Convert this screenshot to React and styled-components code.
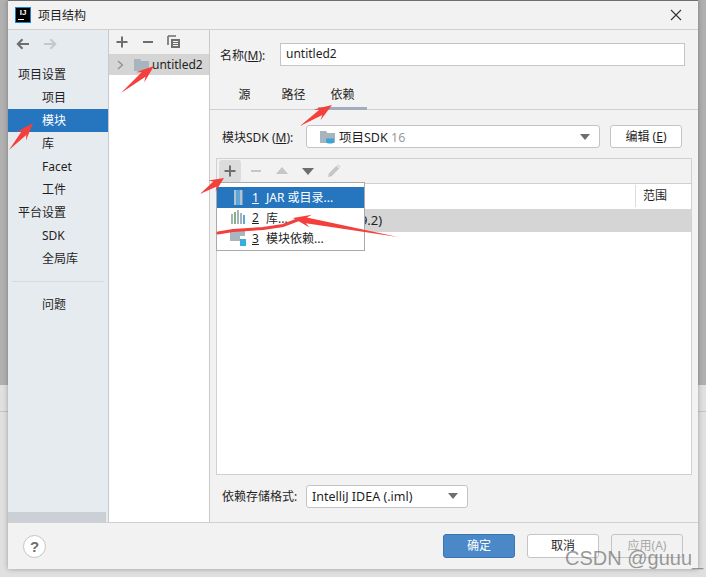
import styled, { createGlobalStyle } from "styled-components";

const FONT = `"Noto Sans", "Noto Sans CJK SC", sans-serif`;

const GlobalStyle = createGlobalStyle`
  html, body { margin: 0; padding: 0; background: #e4e4e4; }
  * { box-sizing: border-box; }
`;

const NAV = [
  { label: "项目设置", heading: true },
  { label: "项目" },
  { label: "模块", selected: true },
  { label: "库" },
  { label: "Facet" },
  { label: "工件" },
  { label: "平台设置", heading: true },
  { label: "SDK" },
  { label: "全局库" },
];

const MENU = [
  { key: "1", label: "JAR 或目录...", icon: "jar", selected: true },
  { key: "2", label: "库...", icon: "lib" },
  { key: "3", label: "模块依赖...", icon: "module" },
];

// tail -> tip marker strokes drawn on top of the screenshot
const ARROWS = [
  { from: [9, 150], to: [33, 123] },
  { from: [121, 93], to: [154, 66] },
  { from: [300, 126], to: [332, 105] },
  { from: [200, 194], to: [224, 178] },
  { from: [398, 237], to: [293, 218] },
];

const arrowPoints = ({ from, to }) => {
  const dx = to[0] - from[0];
  const dy = to[1] - from[1];
  const len = Math.hypot(dx, dy);
  const ux = dx / len;
  const uy = dy / len;
  const at = (along, side) =>
    `${to[0] - ux * along - uy * side},${to[1] - uy * along + ux * side}`;
  const head = Math.min(18, len * 0.5);
  return [
    `${from[0]},${from[1]}`,
    at(head * 0.75, 3),
    at(head, 6.500),
    `${to[0]},${to[1]}`,
    at(head, -6.500),
    at(head * 0.75, -3),
  ].join(" ");
};

const Plus = () => (
  <svg width="14" height="14" viewBox="0 0 14 14">
    <path d="M7 1.5v11M1.5 7h11" stroke="#6e6e6e" strokeWidth="2" />
  </svg>
);

const Minus = ({ color = "#6e6e6e" }) => (
  <svg width="14" height="14" viewBox="0 0 14 14">
    <path d="M2 7h10" stroke={color} strokeWidth="2" />
  </svg>
);

const Triangle = ({ color, down }) => (
  <svg width="14" height="10" viewBox="0 0 14 10">
    <path d={down ? "M1 2h12L7 9z" : "M1 8h12L7 1z"} fill={color} />
  </svg>
);

const Pencil = () => (
  <svg width="14" height="14" viewBox="0 0 14 14">
    <path d="M1 13l.8-3.6L9.4 1.8l2.8 2.8-7.6 7.6zM10.2 1l.8-.4 2.4 2.4-.4.8z" fill="#c6c6c6" />
  </svg>
);

const CopyIcon = () => (
  <svg width="14" height="14" viewBox="0 0 14 14">
    <path d="M1 1h8M1 1v9" stroke="#6e6e6e" strokeWidth="1.6" fill="none" />
    <path d="M4 4h9v9H4z" fill="#6e6e6e" />
    <path d="M6 6.5h5M6 8.5h5M6 10.5h5" stroke="#f2f2f2" strokeWidth="1" />
  </svg>
);

const NavArrow = ({ color, flip }) => (
  <svg width="14" height="12" viewBox="0 0 14 12" style={flip ? { transform: "scaleX(-1)" } : undefined}>
    <path d="M13 6H2M6.5 1.2L1.8 6l4.7 4.8" stroke={color} strokeWidth="2" fill="none" />
  </svg>
);

const Folder = ({ cup }) => (
  <svg width="15" height="14" viewBox="0 0 15 14">
    <path d="M0 1h6l1.5 2H15v10H0z" fill="#a8b5bf" />
    {cup && <path d="M6 8.500h8v2.500a2.500 2.500 0 0 1-2.500 2.500h-3A2.500 2.500 0 0 1 6 11z" fill="#3aa3d8" />}
  </svg>
);

const MenuIcon = ({ type }) => {
  if (type === "jar") {
    return (
      <svg width="16" height="15" viewBox="0 0 16 15">
        <path d="M4 0h2.500v15H4zM10 0h2.500v15H10z" fill="#b4c2cc" />
        <path d="M6.500 0H10v15H6.500z" fill="#5aa9dd" />
      </svg>
    );
  }
  if (type === "lib") {
    return (
      <svg width="16" height="15" viewBox="0 0 16 15">
        <path d="M1 4h2v10H1zM10 3h2v11h-2z" fill="#a6b3bd" />
        <path d="M4 2h2v12H4z" fill="#7cb87e" />
        <path d="M7 0h2v14H7z" fill="#a6b3bd" />
        <path d="M13 5h2v9h-2z" fill="#5aa9dd" />
      </svg>
    );
  }
  return (
    <svg width="16" height="15" viewBox="0 0 16 15">
      <path d="M0 0h15v5h-5v5H0z" fill="#a9b5bf" />
      <path d="M10 8h6v7h-6z" fill="#38ade0" />
    </svg>
  );
};

const Caret = () => (
  <svg width="10" height="6" viewBox="0 0 10 6">
    <path d="M0 0h10L5 6z" fill="#6e6e6e" />
  </svg>
);

const App = () => {
  return (
    <Page>
      <GlobalStyle />
      <Dialog>
        <TitleBar>
          <AppLogo>
            <span>IJ</span>
          </AppLogo>
          <Title>项目结构</Title>
          <CloseIcon width="12" height="12" viewBox="0 0 12 12">
            <path d="M1 1l10 10M11 1L1 11" stroke="#333" strokeWidth="1.1" />
          </CloseIcon>
        </TitleBar>

        <Body>
          <Sidebar>
            <SideNav>
              <NavArrow color="#6e6e6e" />
              <NavArrow color="#c4c8cc" flip />
            </SideNav>
            {NAV.map((item) => (
              <SideRow key={item.label} $heading={item.heading} $selected={item.selected}>
                {item.label}
              </SideRow>
            ))}
            <SideDivider />
            <SideRow>问题</SideRow>
            <SideScroll />
          </Sidebar>

          <ModuleList>
            <ListToolbar>
              <Plus />
              <Minus />
              <CopyIcon />
            </ListToolbar>
            <ModuleRow>
              <svg width="7" height="10" viewBox="0 0 7 10">
                <path d="M1 1l4.500 4L1 9" stroke="#8c8c8c" strokeWidth="1.2" fill="none" />
              </svg>
              <Folder />
              <span>untitled2</span>
            </ModuleRow>
          </ModuleList>

          <Content>
            <NameRow>
              <NameLabel>
                名称(<u>M</u>):
              </NameLabel>
              <NameInput>untitled2</NameInput>
            </NameRow>

            <TabBar>
              <Tab>源</Tab>
              <Tab>路径</Tab>
              <Tab $active>依赖</Tab>
            </TabBar>

            <SdkRow>
              <FieldLabel>
                模块SDK (<u>M</u>):
              </FieldLabel>
              <Combo $width={294}>
                <Folder cup />
                <span>
                  项目SDK <Muted>16</Muted>
                </span>
                <CaretSlot>
                  <Caret />
                </CaretSlot>
              </Combo>
              <EditButton>
                编辑 (<u>E</u>)
              </EditButton>
            </SdkRow>

            <Panel>
              <PanelToolbar>
                <ToolButton $hover>
                  <Plus />
                </ToolButton>
                <ToolButton>
                  <Minus color="#c6c6c6" />
                </ToolButton>
                <ToolButton>
                  <Triangle color="#c6c6c6" />
                </ToolButton>
                <ToolButton>
                  <Triangle color="#6e6e6e" down />
                </ToolButton>
                <ToolButton>
                  <Pencil />
                </ToolButton>
              </PanelToolbar>
              <TableHead>
                <ScopeCell>范围</ScopeCell>
              </TableHead>
              <TableRow>(9.2)</TableRow>

              <Menu>
                {MENU.map((item) => (
                  <MenuItem key={item.key} $selected={item.selected}>
                    <MenuIconSlot>
                      <MenuIcon type={item.icon} />
                    </MenuIconSlot>
                    <MenuKey>{item.key}</MenuKey>
                    <span>{item.label}</span>
                  </MenuItem>
                ))}
              </Menu>
            </Panel>

            <FormatRow>
              <FieldLabel>依赖存储格式:</FieldLabel>
              <Combo $width={162}>
                <span>IntelliJ IDEA (.iml)</span>
                <CaretSlot>
                  <Caret />
                </CaretSlot>
              </Combo>
            </FormatRow>
          </Content>
        </Body>

        <Footer>
          <HelpButton>?</HelpButton>
          <FooterActions>
            <DialogButton $primary>确定</DialogButton>
            <DialogButton>取消</DialogButton>
            <DialogButton $disabled>应用(A)</DialogButton>
          </FooterActions>
        </Footer>
      </Dialog>

      <Markup width="706" height="577" viewBox="0 0 706 577">
        {ARROWS.map((arrow) => (
          <polygon key={arrow.to.join()} points={arrowPoints(arrow)} fill="#f4403c" />
        ))}
        <path
          d="M218 233L233 230.500L263 228.500L283 225.500L300 219"
          stroke="#f4403c"
          strokeWidth="3"
          fill="none"
          strokeLinecap="round"
        />
      </Markup>
      <Watermark>CSDN @guuu_</Watermark>
    </Page>
  );
};

const Page = styled.div`
  position: relative;
  width: 706px;
  height: 577px;
  overflow: hidden;
  font-family: ${FONT};
  font-size: 12px;
  color: #1f1f1f;
  background: linear-gradient(
    to bottom,
    #b0b0b0 0,
    #b0b0b0 385px,
    #e0e0e0 385px,
    #e0e0e0 411px,
    #c4c4c4 411px,
    #c4c4c4 412px,
    #e0e0e0 412px
  );
`;

const Dialog = styled.div`
  display: flex;
  flex-direction: column;
  width: 690px;
  height: 569px;
  margin-left: 8px;
  background: #f2f2f2;
  border-top: 1px solid #6f6f6f;
  box-shadow: 0 0 5px rgba(0, 0, 0, 0.3);
`;

const TitleBar = styled.div`
  display: flex;
  align-items: center;
  flex: none;
  height: 29px;
  padding: 0 16px 0 7px;
  border-bottom: 1px solid #d0d0d0;
`;

const AppLogo = styled.div`
  position: relative;
  display: flex;
  justify-content: center;
  width: 16px;
  height: 16px;
  background: #000;
  border: 1px solid #1f7fd0;
  color: #fff;
  font-family: "Liberation Sans", sans-serif;
  font-size: 8px;
  font-weight: 700;
  line-height: 10px;

  &::after {
    content: "";
    position: absolute;
    left: 2px;
    bottom: 2px;
    width: 6px;
    height: 1px;
    background: #fff;
  }
`;

const Title = styled.div`
  margin-left: 7px;
  font-size: 12px;
`;

const CloseIcon = styled.svg`
  margin-left: auto;
`;

const Body = styled.div`
  display: flex;
  flex: 1;
  min-height: 0;
`;

const Sidebar = styled.div`
  display: flex;
  flex-direction: column;
  flex: none;
  width: 101px;
  background: #e6ebf0;
  border-right: 1px solid #c9c9c9;
`;

const SideNav = styled.div`
  display: flex;
  align-items: flex-start;
  flex: none;
  gap: 13px;
  height: 33px;
  padding: 8px 0 0 8px;
`;

const SideRow = styled.div`
  flex: none;
  height: 23px;
  padding-left: ${(p) => (p.$heading ? "10px" : "34px")};
  line-height: 23px;
  background: ${(p) => (p.$selected ? "#2675bf" : "transparent")};
  color: ${(p) => (p.$selected ? "#fff" : "#1f1f1f")};
`;

const SideDivider = styled.div`
  flex: none;
  height: 1px;
  margin: 11px 4px;
  background: #d6dade;
`;

const SideScroll = styled.div`
  flex: none;
  width: 98px;
  height: 10px;
  margin-top: auto;
  background: #cbd0d6;
`;

const ModuleList = styled.div`
  flex: none;
  width: 101px;
  background: #fff;
  border-right: 1px solid #c9c9c9;
`;

const ListToolbar = styled.div`
  display: flex;
  align-items: center;
  gap: 12px;
  height: 24px;
  padding-left: 6px;
  background: #f2f2f2;
`;

const ModuleRow = styled.div`
  display: flex;
  align-items: center;
  height: 21px;
  padding-left: 8px;
  background: #d5d5d5;
  font-size: 12px;

  svg:first-child {
    margin-right: 10px;
  }

  span {
    margin-left: 3px;
  }
`;

const Content = styled.div`
  display: flex;
  flex-direction: column;
  flex: 1;
  min-width: 0;
`;

const NameRow = styled.div`
  display: flex;
  align-items: center;
  flex: none;
  height: 23px;
  margin: 13px 13px 0 10px;
`;

const NameLabel = styled.div`
  flex: none;
  width: 60px;
`;

const NameInput = styled.div`
  flex: 1;
  height: 23px;
  padding-left: 5px;
  background: #fff;
  border: 1px solid #c4c4c4;
  font-size: 12px;
  line-height: 20px;
`;

const TabBar = styled.div`
  display: flex;
  align-items: flex-end;
  flex: none;
  height: 44px;
  padding-left: 10px;
  border-bottom: 1px solid #d0d0d0;
`;

const Tab = styled.div`
  width: 49px;
  height: 28px;
  margin-bottom: -1px;
  line-height: 26px;
  text-align: center;
  border-bottom: 3px solid ${(p) => (p.$active ? "#a2adbd" : "transparent")};
`;

const SdkRow = styled.div`
  display: flex;
  align-items: center;
  flex: none;
  height: 23px;
  margin-top: 15px;
  padding-left: 12px;
`;

const FieldLabel = styled.div`
  flex: none;
  width: 84px;
`;

const Combo = styled.div`
  display: flex;
  align-items: center;
  flex: none;
  gap: 4px;
  width: ${(p) => p.$width}px;
  height: 23px;
  padding-left: 13px;
  background: #fff;
  border: 1px solid #c4c4c4;
  border-radius: 3px;
  font-size: 13px;
  white-space: nowrap;

  &:has(> span:first-child) {
    padding-left: 5px;
  }

  span {
    font-size: 12.500px;
  }
`;

const Muted = styled.span`
  color: #9a9a9a;
`;

const CaretSlot = styled.div`
  display: flex;
  margin-left: auto;
  margin-right: 9px;
`;

const EditButton = styled.div`
  flex: none;
  width: 72px;
  height: 23px;
  margin-left: 10px;
  background: #fff;
  border: 1px solid #c4c4c4;
  border-radius: 3px;
  line-height: 21px;
  text-align: center;
`;

const Panel = styled.div`
  position: relative;
  flex: 1;
  min-height: 0;
  margin: 10px 6px 0;
  background: #fff;
  border: 1px solid #d0d0d0;
`;

const PanelToolbar = styled.div`
  display: flex;
  align-items: center;
  gap: 4px;
  height: 25px;
  padding-left: 2px;
  background: #f2f2f2;
  border-bottom: 1px solid #d0d0d0;
`;

const ToolButton = styled.div`
  display: flex;
  align-items: center;
  justify-content: center;
  width: 22px;
  height: 22px;
  border-radius: 3px;
  background: ${(p) => (p.$hover ? "#dcdcdc" : "transparent")};
`;

const TableHead = styled.div`
  display: flex;
  justify-content: flex-end;
  height: 25px;
  padding: 1px 0 2px;
`;

const ScopeCell = styled.div`
  width: 56px;
  padding-left: 7px;
  border-left: 1px solid #dcdcdc;
  line-height: 22px;
`;

const TableRow = styled.div`
  height: 23px;
  padding-left: 139px;
  background: #d5d5d5;
  font-size: 13px;
  line-height: 23px;
`;

const Menu = styled.div`
  position: absolute;
  top: 23px;
  left: -1px;
  width: 149px;
  height: 69px;
  padding-top: 4px;
  background: #fff;
  border: 1px solid #aaa;
`;

const MenuItem = styled.div`
  display: flex;
  align-items: center;
  height: 20.500px;
  background: ${(p) => (p.$selected ? "#2675bf" : "transparent")};
  color: ${(p) => (p.$selected ? "#fff" : "#1f1f1f")};
`;

const MenuIconSlot = styled.div`
  display: flex;
  flex: none;
  width: 16px;
  margin-left: 13px;
`;

const MenuKey = styled.u`
  flex: none;
  width: 14px;
  margin-left: 6px;
`;

const FormatRow = styled.div`
  display: flex;
  align-items: center;
  flex: none;
  height: 24px;
  margin: 9px 0 14px;
  padding-left: 12px;
`;

const Footer = styled.div`
  display: flex;
  align-items: center;
  flex: none;
  height: 47px;
  padding: 0 15px;
  border-top: 1px solid #d0d0d0;
`;

const HelpButton = styled.div`
  width: 23px;
  height: 23px;
  background: #fff;
  border: 1px solid #c4c4c4;
  border-radius: 50%;
  color: #6e6e6e;
  font-family: "Liberation Sans", sans-serif;
  font-size: 15px;
  font-weight: 700;
  line-height: 21px;
  text-align: center;
`;

const FooterActions = styled.div`
  display: flex;
  gap: 12px;
  margin-left: auto;
`;

const DialogButton = styled.div`
  width: 72px;
  height: 24px;
  border: 1px solid ${(p) => (p.$primary ? "#3a76b4" : "#c4c4c4")};
  border-radius: 3px;
  background: ${(p) => (p.$primary ? "#4a88c7" : p.$disabled ? "#f2f2f2" : "#fff")};
  color: ${(p) => (p.$primary ? "#fff" : p.$disabled ? "#a8a8a8" : "#1f1f1f")};
  line-height: 22px;
  text-align: center;
`;

const Markup = styled.svg`
  position: absolute;
  top: 0;
  left: 0;
  pointer-events: none;
`;

const Watermark = styled.div`
  position: absolute;
  top: 547px;
  left: 565px;
  color: rgba(110, 110, 110, 0.7);
  font-family: "Liberation Sans", sans-serif;
  font-size: 20px;
  line-height: 23px;
  white-space: nowrap;
`;

export default App;
